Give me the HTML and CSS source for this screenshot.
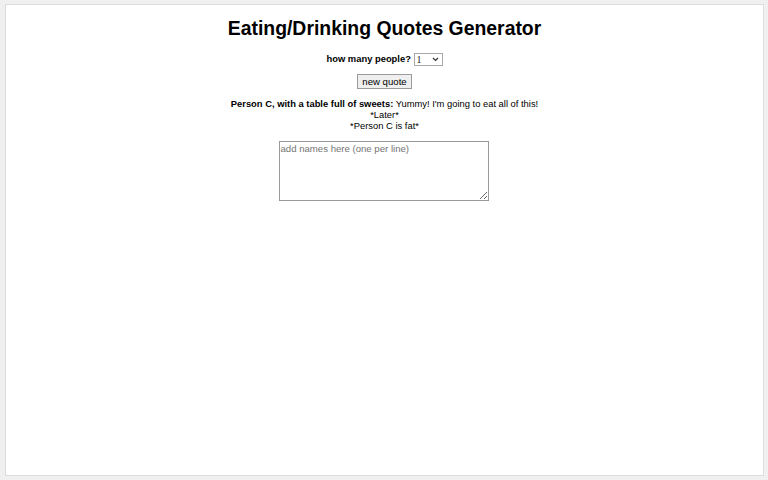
FILE: index.html
```html
<!DOCTYPE html>
<html lang="en">

<head>
    <meta charset="UTF-8">
    <meta name="viewport" content="width=device-width, initial-scale=1.0">
    <title>Eating/Drinking Quotes Generator</title>
    <link rel="stylesheet" href="styles.css">
</head>

<body>
    <div id="page">
        <h1>Eating/Drinking Quotes Generator</h1>
        <p class="choix">
            <b>how many people?</b>
            <span class="liste">
                <select id="nombre">
                    <option>1</option>
                    <option>2</option>
                    <option>3</option>
                </select>
                <svg class="fleche" width="7" height="5" viewBox="0 0 7 5"><path d="M1 1 L3.5 3.5 L6 1" fill="none" stroke="#333" stroke-width="1.2"/></svg>
            </span>
        </p>
        <p class="choix">
            <button id="nouveau">new quote</button>
        </p>
        <p id="citation"><b>Person C, with a table full of sweets:</b> Yummy! I'm going to eat all of this!<br>*Later*<br>*Person C is fat*</p>
        <textarea id="noms" placeholder="add names here (one per line)"></textarea>
    </div>
</body>

</html>
```
FILE: styles.css
```css
html, body {
    margin: 0;
    height: 100%;
}

body {
    background-color: #f0f0f0;
    padding: 4px 4px 4px 5px;
    box-sizing: border-box;
    font-family: "Liberation Sans", Arial, sans-serif;
    font-size: 9.4px;
}

#page {
    background-color: white;
    border: 1px solid #dcdcdc;
    height: 100%;
    box-sizing: border-box;
    text-align: center;
    padding-top: 1px;
}

h1 {
    font-size: 19.4px;
    margin: 11px 0 0 0;
}

.choix {
    margin: 13px 0 0 0;
}

.choix + .choix {
    margin-top: 8px;
}

.liste {
    position: relative;
    display: inline-block;
    vertical-align: middle;
}

select {
    appearance: none;
    -webkit-appearance: none;
    display: block;
    font-family: "Liberation Serif", serif;
    font-size: 10px;
    width: 29px;
    height: 13px;
    padding: 0 0 0 2px;
    border: 1px solid #a9a9a9;
    border-radius: 0;
    background-color: white;
    color: #222;
}

.fleche {
    position: absolute;
    right: 4px;
    top: 4px;
    pointer-events: none;
}

#nouveau {
    font-family: "Liberation Sans", Arial, sans-serif;
    font-size: 9.6px;
    padding: 1px 4px;
    border: 1px solid #9a9a9a;
    border-radius: 0;
    background-color: #efefef;
}

#citation {
    margin: 9px 0 0 0;
    line-height: 11px;
}

#noms {
    display: block;
    margin: 10px auto 0;
    width: 210px;
    height: 60px;
    box-sizing: border-box;
    font-family: "Liberation Sans", Arial, sans-serif;
    font-size: 9.6px;
    border: 1px solid #999;
    padding: 1px;
    resize: vertical;
    position: relative;
    left: -1px;
}
```
